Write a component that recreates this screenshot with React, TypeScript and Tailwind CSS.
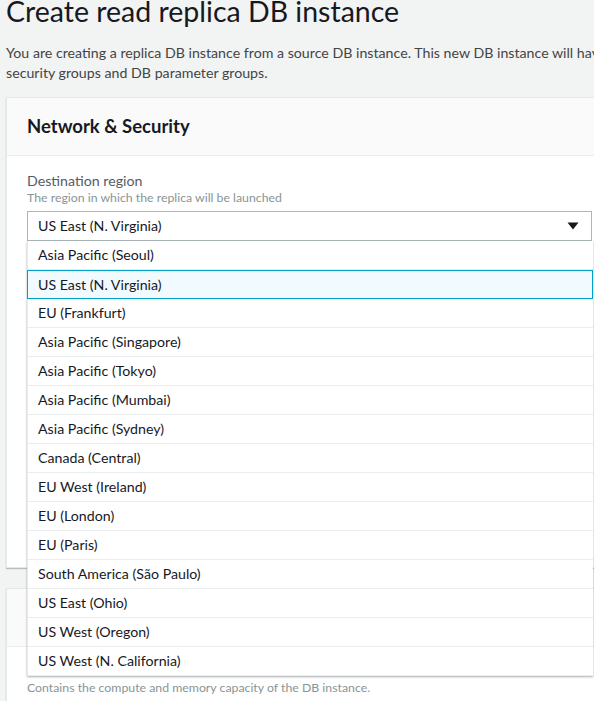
import React from "react";

// Regiões disponíveis no menu suspenso
const regioes = [
  "Asia Pacific (Seoul)",
  "US East (N. Virginia)",
  "EU (Frankfurt)",
  "Asia Pacific (Singapore)",
  "Asia Pacific (Tokyo)",
  "Asia Pacific (Mumbai)",
  "Asia Pacific (Sydney)",
  "Canada (Central)",
  "EU West (Ireland)",
  "EU (London)",
  "EU (Paris)",
  "South America (São Paulo)",
  "US East (Ohio)",
  "US West (Oregon)",
  "US West (N. California)",
];

const selecionada = "US East (N. Virginia)";

function Card({ title, children }: { title: string; children?: React.ReactNode }) {
  return (
    <section className="bg-white border border-[#e4e8e8] shadow-[0_1px_1px_0_rgba(0,28,36,0.25)]">
      <header className="h-[58px] bg-[#fafafa] border-b border-[#eaeded] flex items-center px-5">
        <h2 className="text-[18.5px] font-bold text-[#16191f]">{title}</h2>
      </header>
      {children}
    </section>
  );
}

export default function App() {
  return (
    <div
      className="w-[594px] h-[701px] overflow-hidden bg-[#f2f3f3] text-[#16191f]"
      style={{ fontFamily: "Lato, 'Liberation Sans', sans-serif" }}
    >
      <div className="w-[640px] pl-[6px]">
        {/* Título da página */}
        <h1 className="text-[28.5px] leading-[34px] -mt-[6px] text-[#16191f]">Create read replica DB instance</h1>
        <p className="mt-[15px] text-[14.2px] leading-[20px] text-[#444]">
          You are creating a replica DB instance from a source DB instance. This new DB instance will have
          <br />
          security groups and DB parameter groups.
        </p>

        <div className="mt-[14px]">
          <Card title="Network & Security">
            <div className="h-[411px] px-5 pt-[16px]">
              <div className="text-[14.2px] leading-[18px] text-[#545b64]">Destination region</div>
              <div className="text-[12.3px] leading-[16px] text-[#879596]">
                The region in which the replica will be launched
              </div>
              <div className="relative mt-[5px] w-[565px]">
                <div className="h-[30px] border border-[#aab7b8] bg-white flex items-center pl-[10px] pr-[12px] text-[14.2px]">
                  <span className="flex-1">{selecionada}</span>
                  <svg width="12" height="8" viewBox="0 0 12 8">
                    <path d="M0.5 0.5 H11.5 L6 7.5 Z" fill="#16191f" />
                  </svg>
                </div>
                {/* Lista de opções */}
                <ul className="absolute left-0 top-full w-[566px] bg-white z-10 shadow-[0_1px_2px_0_rgba(0,28,36,0.35)] border-l border-[#e4e8e8]">
                  {regioes.map((r) => (
                    <li
                      key={r}
                      className={
                        r === selecionada
                          ? "h-[29px] flex items-center pl-[10px] text-[14.2px] bg-[#f1faff] border border-[#00a1c9] -ml-px"
                          : "h-[29px] flex items-center pl-[10px] text-[14.2px] border-b border-[#eaeded]"
                      }
                    >
                      {r}
                    </li>
                  ))}
                </ul>
              </div>
            </div>
          </Card>
        </div>

        <div className="mt-[20px]">
          <Card title="Instance specifications">
            <div className="px-5 pt-[13px] pb-6">
              <div className="text-[14.2px] leading-[18px] text-[#545b64]">DB instance class</div>
              <div className="mt-[2px] text-[12.3px] leading-[16px] text-[#879596]">
                Contains the compute and memory capacity of the DB instance.
              </div>
            </div>
          </Card>
        </div>
      </div>
    </div>
  );
}
